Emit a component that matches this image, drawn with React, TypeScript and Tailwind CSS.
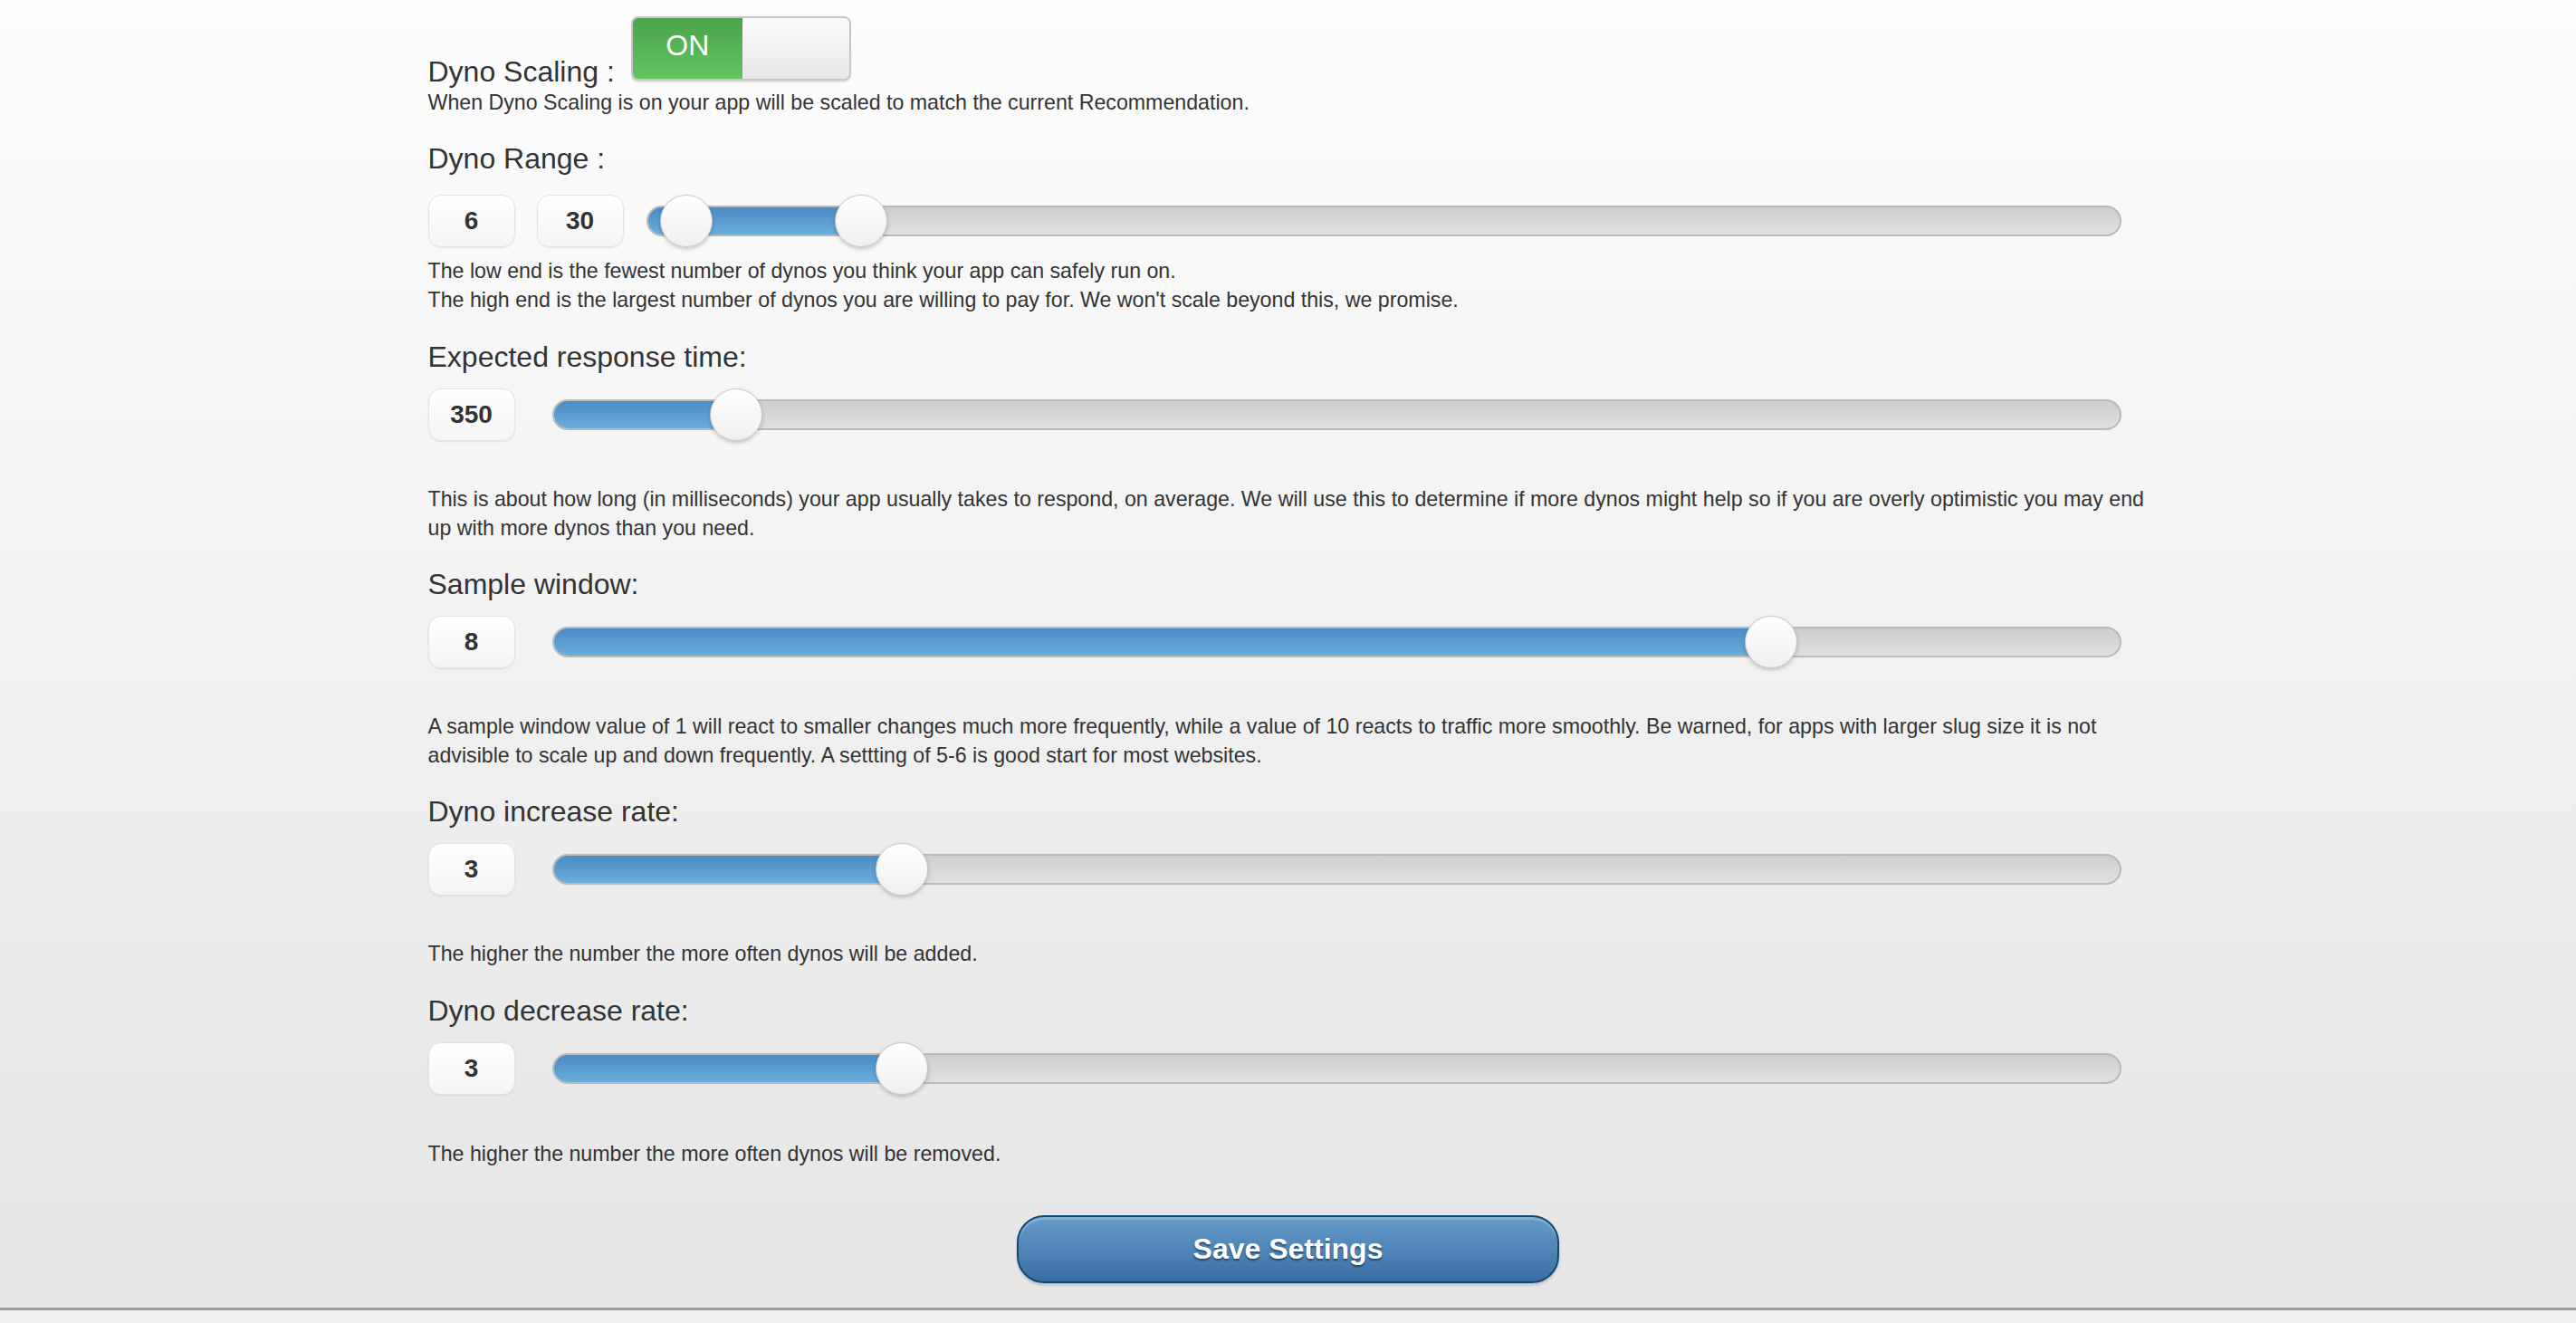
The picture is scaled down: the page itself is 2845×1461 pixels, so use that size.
import React from "react";

const font = { fontFamily: '"Liberation Sans", Arial, Helvetica, sans-serif' };

function NumBox({ value }: { value: string }) {
  return (
    <div className="flex h-[58px] w-[96px] shrink-0 items-center justify-center rounded-[14px] border border-[#e3e3e3] bg-linear-to-b from-[#ffffff] to-[#f4f4f4] text-[28px] font-bold text-[#333] shadow-[0_1px_2px_rgba(0,0,0,0.08)]">
      {value}
    </div>
  );
}

function Handle({ left }: { left: string }) {
  return (
    <div
      className="absolute top-1/2 h-[58px] w-[58px] -translate-x-1/2 -translate-y-1/2 rounded-full border border-[#c9c9c9] bg-linear-to-b from-[#ffffff] to-[#efefef] shadow-[0_2px_4px_rgba(0,0,0,0.22)]"
      style={{ left }}
    />
  );
}

function Track({ fill, handles }: { fill: string; handles: string[] }) {
  return (
    <div className="relative h-[34px] flex-1 rounded-full border-2 border-[#bababa] bg-linear-to-b from-[#cecece] to-[#e0e0e0]">
      <div
        className="absolute bottom-0 left-0 top-0 rounded-l-full bg-linear-to-b from-[#4a8cc4] to-[#6baddb]"
        style={{ width: fill }}
      />
      {handles.map((h, i) => (
        <Handle key={i} left={h} />
      ))}
    </div>
  );
}

function Heading({ children }: { children: React.ReactNode }) {
  return <div className="mt-[28px] text-[32px] leading-[36px] text-[#333]">{children}</div>;
}

function Desc({ children, className = "" }: { children: React.ReactNode; className?: string }) {
  return <div className={"text-[23.2px] leading-[32.2px] text-[#333] " + className}>{children}</div>;
}

function SliderRow({ value, pos }: { value: string; pos: string }) {
  return (
    <div className="mt-[17px] flex items-center pr-[30px]">
      <NumBox value={value} />
      <div className="ml-[41px] flex flex-1">
        <Track fill={pos} handles={[pos]} />
      </div>
    </div>
  );
}

export default function App() {
  return (
    <div
      className="flex min-h-[1461px] w-full flex-col bg-linear-to-b from-[#fdfdfd] to-[#e5e5e5]"
      style={font}
    >
      <div className="mx-auto w-[1900px] flex-1 pt-[18px]">
        <div className="flex items-end">
          <div className="text-[32px] leading-[36px] text-[#333]">Dyno Scaling :</div>
          <div className="mb-[8px] ml-[18px] flex h-[71px] w-[243px] overflow-hidden rounded-[8px] border-2 border-[#c6c6c6] shadow-[0_2px_1px_rgba(0,0,0,0.12)]">
            <div className="flex w-[121px] items-center justify-center bg-linear-to-b from-[#4ca34c] to-[#60c660] pb-[7px] text-[32px] text-white">
              ON
            </div>
            <div className="flex-1 bg-linear-to-b from-[#fbfbfb] to-[#e8e8e8]" />
          </div>
        </div>
        <Desc>When Dyno Scaling is on your app will be scaled to match the current Recommendation.</Desc>

        <Heading>Dyno Range :</Heading>
        <div className="mt-[22px] flex items-center pr-[30px]">
          <NumBox value="6" />
          <div className="ml-[24px]">
            <NumBox value="30" />
          </div>
          <div className="ml-[25px] flex flex-1">
            <Track fill="14.5%" handles={["2.6%", "14.5%"]} />
          </div>
        </div>
        <Desc className="mt-[10px]">
          The low end is the fewest number of dynos you think your app can safely run on.
          <br />
          The high end is the largest number of dynos you are willing to pay for. We won't scale beyond this, we promise.
        </Desc>

        <Heading>Expected response time:</Heading>
        <SliderRow value="350" pos="11.67%" />
        <Desc className="mt-[48px]">
          This is about how long (in milliseconds) your app usually takes to respond, on average. We will use this to determine if more dynos might help so if you are overly optimistic you may end up with more dynos than you need.
        </Desc>

        <Heading>Sample window:</Heading>
        <SliderRow value="8" pos="77.78%" />
        <Desc className="mt-[48px]">
          A sample window value of 1 will react to smaller changes much more frequently, while a value of 10 reacts to traffic more smoothly. Be warned, for apps with larger slug size it is not advisible to scale up and down frequently. A settting of 5-6 is good start for most websites.
        </Desc>

        <Heading>Dyno increase rate:</Heading>
        <SliderRow value="3" pos="22.22%" />
        <Desc className="mt-[48px]">The higher the number the more often dynos will be added.</Desc>

        <Heading>Dyno decrease rate:</Heading>
        <SliderRow value="3" pos="22.22%" />
        <Desc className="mt-[49px]">The higher the number the more often dynos will be removed.</Desc>

        <div className="mt-[52px] flex justify-center">
          <button className="relative h-[75px] w-[599px] rounded-[30px] border-2 border-[#0f4a75] bg-linear-to-b from-[#659dcb] to-[#3a6ea3] text-[32px] font-bold text-white shadow-[inset_0_3px_0_rgba(255,255,255,0.2),0_2px_3px_rgba(0,0,0,0.2)] [text-shadow:0_2px_2px_rgba(0,0,0,0.45)]">
            Save Settings
          </button>
        </div>
      </div>
      <div className="h-[17px] border-t-[3px] border-[#9c9c9c] bg-[#efefef]" />
    </div>
  );
}
